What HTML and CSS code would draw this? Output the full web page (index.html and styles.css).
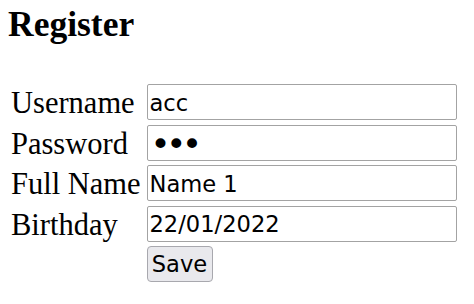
FILE: index.html
```html
<!DOCTYPE html>
<html>
<head>
<meta charset="utf-8">
<title>Register</title>
<link rel="stylesheet" href="styles.css">
</head>
<body>
<h2 class="title">Register</h2>
<form class="form">
  <label class="label" for="u">Username</label>
  <input class="field" id="u" type="text" value="acc">
  <label class="label" for="p">Password</label>
  <input class="field field-secret" id="p" type="password" value="abc">
  <label class="label" for="n">Full Name</label>
  <input class="field" id="n" type="text" value="Name 1">
  <label class="label" for="b">Birthday</label>
  <input class="field" id="b" type="text" value="22/01/2022">
  <span class="spacer"></span>
  <div class="actions"><button class="btn" type="button">Save</button></div>
</form>
</body>
</html>
```

FILE: styles.css
```css
html, body {
  background: #ffffff;
}
body {
  margin: 0;
  padding: 4px 8px 0;
  font-family: "Liberation Serif", "Times New Roman", serif;
  color: #000;
}
.title {
  margin: 0;
  font-size: 35.5px;
  line-height: 40px;
  font-weight: bold;
}
.form {
  margin-top: 40px;
  padding-left: 3px;
  display: grid;
  grid-template-columns: 135.5px 310px;
  grid-auto-rows: 36px;
  row-gap: 4.5px;
}
.label {
  font-size: 30.5px;
  line-height: 38px;
  white-space: nowrap;
}
.field {
  box-sizing: border-box;
  width: 310px;
  height: 36px;
  margin: 0;
  padding: 1px 2px 0;
  border: 1px solid #a3a3a3;
  border-radius: 2px;
  font-family: "DejaVu Sans", Verdana, sans-serif;
  font-size: 22.6px;
  color: #000;
  background: #fff;
}
.field-secret {
  font-size: 34px;
  letter-spacing: -4.3px;
  padding: 3px 2px 0 3px;
  line-height: 1;
}
.actions {
  display: flex;
}
.btn {
  box-sizing: border-box;
  width: 66px;
  height: 36px;
  margin: 0;
  padding: 0;
  border: 1px solid #a8a8ae;
  border-radius: 4px;
  background: #e9e9ed;
  font-family: "DejaVu Sans", Verdana, sans-serif;
  font-size: 22.6px;
  color: #000;
}
```
